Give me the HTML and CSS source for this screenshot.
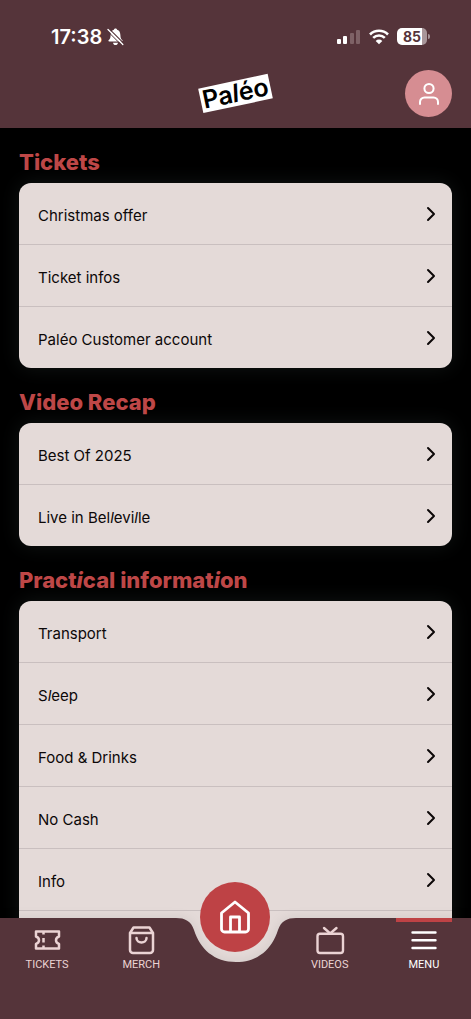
FILE: index.html
```html
<!DOCTYPE html>
<html lang="en">
<head>
<meta charset="utf-8">
<meta name="viewport" content="width=device-width, initial-scale=1">
<title>Paléo – Menu</title>
<link rel="stylesheet" href="styles.css">
</head>
<body>
<svg class="sprite" aria-hidden="true">
  <symbol id="chevron" viewBox="0 0 10 16"><path d="M2 2l6 6-6 6" fill="none" stroke="currentColor" stroke-width="2" stroke-linecap="round" stroke-linejoin="round"/></symbol>
</svg>
<div class="app">
  <header class="header">
    <div class="status">
      <div class="status-group">
        <span class="time">17:38</span>
        <svg class="bell" viewBox="0 0 17 18" aria-label="Silent">
          <path d="M8.500 .5C9.500 .5 10 1.100 10.100 1.800C12.600 2.600 13.300 4.800 13.400 7.200C13.500 10 14 10.800 15.200 12C15.900 12.700 15.700 13.500 14.700 13.500H2.300C1.300 13.500 1.100 12.700 1.800 12C3 10.800 3.500 10 3.600 7.200C3.700 4.800 4.400 2.600 6.900 1.800C7 1.100 7.500 .5 8.500 .5ZM6 14.700H11C10.700 16.200 9.800 17 8.500 17S6.300 16.200 6 14.700Z" fill="#fff"/>
          <path d="M2.200 .8L17 15.600" stroke="#55343a" stroke-width="1.200"/>
          <path d="M1 1.600L15.800 16.400" stroke="#fff" stroke-width="1.400" stroke-linecap="round"/>
          <path d="M0 2.600L14.600 17.200" stroke="#55343a" stroke-width="1"/>
        </svg>
      </div>
      <div class="status-group status-right">
        <svg class="signal" viewBox="0 0 24 16" aria-label="Signal">
          <g fill="#fff"><rect x="0" y="10" width="4" height="5" rx="1"/><rect x="6" y="7" width="4" height="8" rx="1"/></g>
          <g fill="#7e6266"><rect x="13" y="4" width="4" height="11" rx="1"/><rect x="19" y="1" width="4" height="14" rx="1"/></g>
        </svg>
        <svg class="wifi" viewBox="0 0 20 16" aria-label="Wi-Fi">
          <g fill="none" stroke="#fff" stroke-width="2.600"><path d="M1 5.500A12.800 12.800 0 0 1 19 5.500"/><path d="M4.200 8.900A8.300 8.300 0 0 1 15.800 8.900"/></g>
          <path d="M10 15.200L6.700 11.900A4.700 4.700 0 0 1 13.300 11.900Z" fill="#fff"/>
        </svg>
        <div class="battery"><span class="battery-level">85</span></div>
      </div>
    </div>
    <div class="bar">
      <a class="logo" href="#">Pa<i>l</i>éo</a>
      <button class="avatar" type="button" aria-label="Account">
        <svg viewBox="0 0 24 24" width="24" height="24" fill="none" stroke="#fff" stroke-width="2" stroke-linecap="round"><circle cx="12" cy="6.500" r="4.600"/><path d="M3 22V20A4.500 4.500 0 0 1 7.500 15.500H16.500A4.500 4.500 0 0 1 21 20V22"/></svg>
      </button>
    </div>
  </header>

  <main class="content">
    <section class="section">
      <h2 class="title">Tickets</h2>
      <ul class="card">
        <li><a class="row" href="#">Christmas offer<svg class="chevron"><use href="#chevron"/></svg></a></li>
        <li><a class="row" href="#">Ticket infos<svg class="chevron"><use href="#chevron"/></svg></a></li>
        <li><a class="row" href="#">Paléo Customer account<svg class="chevron"><use href="#chevron"/></svg></a></li>
      </ul>
    </section>
    <section class="section">
      <h2 class="title">Video Recap</h2>
      <ul class="card">
        <li><a class="row" href="#">Best Of 2025<svg class="chevron"><use href="#chevron"/></svg></a></li>
        <li><a class="row" href="#"><span>Live in Bel<i>l</i>evi<i>l</i>le</span><svg class="chevron"><use href="#chevron"/></svg></a></li>
      </ul>
    </section>
    <section class="section">
      <h2 class="title">Pract<i>i</i>cal informat<i>i</i>on</h2>
      <ul class="card">
        <li><a class="row" href="#">Transport<svg class="chevron"><use href="#chevron"/></svg></a></li>
        <li><a class="row" href="#"><span>S<i>l</i>eep</span><svg class="chevron"><use href="#chevron"/></svg></a></li>
        <li><a class="row" href="#">Food &amp; Drinks<svg class="chevron"><use href="#chevron"/></svg></a></li>
        <li><a class="row" href="#">No Cash<svg class="chevron"><use href="#chevron"/></svg></a></li>
        <li><a class="row" href="#">Info<svg class="chevron"><use href="#chevron"/></svg></a></li>
        <li class="row"></li>
      </ul>
    </section>
  </main>

  <nav class="nav">
    <div class="nav-shape" aria-hidden="true">
      <span class="fill"></span>
      <svg class="notch" viewBox="0 0 120 101"><path d="M-2 0H0C9 0 15 3 18 12C24 31 38 44 60 44C82 44 96 31 102 12C105 3 111 0 120 0H122V101H-2Z" fill="#55343a"/></svg>
      <span class="fill"></span>
    </div>
    <div class="tabs">
      <a class="tab" href="#">
        <svg class="tab-icon" viewBox="0 0 32 32" fill="none" stroke="currentColor" stroke-width="2.500" stroke-linejoin="round"><path d="M5 7.500H28V12.500C24 14 24 18.500 28 20V24.500H5V20C9 18.500 9 14 5 12.500Z"/><path d="M12.500 7.500V10.500M12.500 14V18.500M12.500 21.500V24.500"/></svg>
        <span>TICKETS</span>
      </a>
      <a class="tab" href="#">
        <svg class="tab-icon" viewBox="0 0 32 32" fill="none" stroke="currentColor" stroke-width="2.500" stroke-linejoin="round" stroke-linecap="round"><path d="M5 9L8.500 3.500H24.500L28 9V26A3 3 0 0 1 25 29H8A3 3 0 0 1 5 26ZM5 9H28M11.500 14C11.500 20 21.500 20 21.500 14"/></svg>
        <span>MERCH</span>
      </a>
      <a class="home" href="#" aria-label="Home">
        <svg viewBox="0 0 32 34" width="32" height="34" fill="none" stroke="#fff" stroke-width="2.800" stroke-linejoin="round"><path d="M2.500 13L16 2L29.500 13V29A3 3 0 0 1 26.500 32H5.500A3 3 0 0 1 2.500 29ZM11.500 32V17H20.500V32"/></svg>
      </a>
      <a class="tab" href="#">
        <svg class="tab-icon" viewBox="0 0 32 32" fill="none" stroke="currentColor" stroke-width="2.400" stroke-linecap="round"><rect x="3.500" y="9.800" width="25.500" height="19.200" rx="2.500"/><path d="M10 4L16.200 9.500L22.500 4" stroke-linejoin="round"/></svg>
        <span>VIDEOS</span>
      </a>
      <a class="tab active" href="#" aria-current="page">
        <svg class="tab-icon" viewBox="0 0 32 32" fill="none" stroke="currentColor" stroke-width="2.400" stroke-linecap="round"><path d="M4.500 8.500H27.500M4.500 16.200H27.500M4.500 24H27.500"/></svg>
        <span>MENU</span>
      </a>
    </div>
  </nav>
</div>
</body>
</html>
```
FILE: styles.css
```css
* { box-sizing: border-box; }

body {
  margin: 0;
  background: #000;
  font-family: Inter, "Liberation Sans", sans-serif;
  color: #0c0808;
}

a { color: inherit; text-decoration: none; }

.sprite { position: absolute; width: 0; height: 0; }

.app {
  position: relative;
  display: flex;
  flex-direction: column;
  height: 100vh;
  overflow: hidden;
}

/* Header */
.header {
  flex: none;
  padding-bottom: 11px;
  background: #55343a;
}

.status {
  display: flex;
  justify-content: space-between;
  align-items: center;
  height: 70px;
  padding: 3px 41px 0 51px;
}

.status-group { display: flex; align-items: center; gap: 5px; }
.status-right { gap: 8px; }

.time { font-size: 20px; font-weight: 600; color: #fff; }
.bell { width: 17px; height: 18px; }
.signal { width: 24px; height: 16px; }
.wifi { width: 20px; height: 16px; }

.battery {
  position: relative;
  width: 30px;
  height: 17px;
  margin-right: 3px;
  border-radius: 5px;
  background: linear-gradient(to right, #fff 85%, #a8969a 85%);
}

.battery::after {
  content: "";
  position: absolute;
  top: 6px;
  right: -3px;
  width: 2px;
  height: 5px;
  border-radius: 0 2px 2px 0;
  background: #a8969a;
}

.battery-level {
  display: block;
  font-size: 14px;
  line-height: 17px;
  font-weight: 700;
  text-align: center;
  color: #55343a;
}

.bar {
  display: grid;
  grid-template-columns: 1fr auto 1fr;
  align-items: center;
  padding: 0 19px;
}

.logo {
  grid-column: 2;
  padding: 0 2px;
  background: #fff;
  color: #000;
  font-size: 25px;
  line-height: 25px;
  font-weight: 600;
  transform: rotate(-12deg);
}

.avatar {
  display: grid;
  place-items: center;
  justify-self: end;
  width: 47px;
  height: 47px;
  padding: 0;
  border: 0;
  border-radius: 50%;
  background: #d68d92;
}

/* Content */
.content {
  flex: 1;
  min-height: 0;
  overflow-y: auto;
  scrollbar-width: none;
  padding: 0 19px 40px;
}

.section { padding-top: 20px; }

.title {
  margin: 0 0 7px;
  font-size: 22px;
  line-height: 28px;
  font-weight: 800;
  color: #be4747;
}

.card {
  margin: 0;
  padding: 0;
  list-style: none;
  border-radius: 12px;
  background: #e4dad8;
  box-shadow: 0 0 20px #111514;
}

.card li + li { border-top: 1px solid #c9bfbf; }

.row {
  display: flex;
  justify-content: space-between;
  align-items: center;
  height: 61px;
  padding: 3px 16px 0 19px;
  font-size: 15px;
}

.chevron { width: 10px; height: 16px; margin-bottom: 3px; }

/* Bottom navigation */
.nav {
  position: absolute;
  left: 0;
  right: 0;
  bottom: 0;
  height: 101px;
}

.nav-shape {
  display: grid;
  grid-template-columns: 1fr 120px 1fr;
  height: 100%;
  filter: drop-shadow(0 0 6px rgba(0, 0, 0, 0.08));
}

.fill { background: #55343a; }
.notch { width: 120px; height: 101px; overflow: visible; }

.tabs {
  position: absolute;
  inset: 0;
  display: grid;
  grid-template-columns: repeat(5, 1fr);
}

.tab {
  position: relative;
  display: flex;
  flex-direction: column;
  align-items: center;
  gap: 1px;
  padding-top: 6px;
  font-family: Roboto, "Liberation Sans", sans-serif;
  font-size: 11px;
  line-height: 16px;
  color: #ebd3d4;
}

.tab-icon { width: 32px; height: 32px; }

.active { color: #fff; }

.active::before {
  content: "";
  position: absolute;
  top: 0;
  width: 56px;
  height: 4px;
  background: #be4245;
}

.home {
  display: grid;
  place-items: center;
  justify-self: center;
  width: 70px;
  height: 70px;
  margin-top: -36px;
  border-radius: 50%;
  background: #be4245;
}
```
